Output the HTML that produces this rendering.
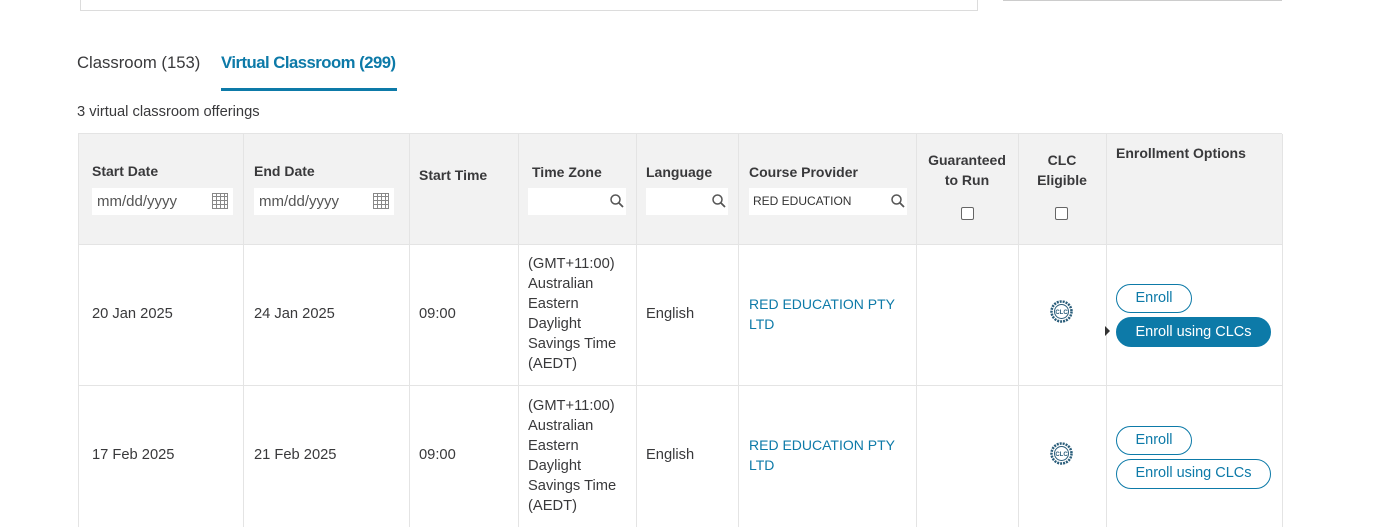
<!DOCTYPE html>
<html><head><style>
body{margin:0;width:1379px;height:527px;overflow:hidden;background:#fff;font-family:"Liberation Sans",sans-serif;color:#39393b;position:relative}
.a{position:absolute}
.topbox{left:80px;top:-2px;width:896px;height:12px;border:1px solid #dcdcdc;border-top:none}
.b{font-weight:bold;font-size:14px;color:#39393b}
.t{font-size:14.7px;line-height:20px}
.v{position:absolute;top:134px;height:393px;width:1px;background:#e4e4e4}
.h{position:absolute;left:78px;width:1204px;height:1px;background:#e4e4e4}
.inp{position:absolute;background:#fff;height:27px;font-size:15px;line-height:27px;color:#555}
.link{color:#0d7aa8;font-size:14px;line-height:20px}
.btn{position:absolute;border:1px solid #0d7aa8;border-radius:15px;color:#0d7aa8;font-size:14.5px;text-align:center;box-sizing:border-box}
.cb{position:absolute;width:11px;height:11px;border:1px solid #666;border-radius:2px;background:#fff}
</style></head><body>
<div class="a topbox"></div>
<div class="a" style="left:1003px;top:0;width:279px;height:1px;background:#ccc"></div>
<div class="a" style="left:77px;top:53px;font-size:16.7px;color:#39393b">Classroom (153)</div>
<div class="a" style="left:221px;top:53px;font-size:16.7px;font-weight:bold;color:#0d7aa8;letter-spacing:-0.5px">Virtual Classroom (299)</div>
<div class="a" style="left:221px;top:88px;width:176px;height:3px;background:#0d7aa8"></div>
<div class="a" style="left:77px;top:104px;font-size:14.7px">3 virtual classroom offerings</div>

<div class="a" style="left:78px;top:134px;width:1204px;height:110px;background:#f2f2f2"></div>
<div class="h" style="top:133px"></div><div class="h" style="top:244px"></div><div class="h" style="top:385px"></div>
<div class="v" style="left:78px"></div><div class="v" style="left:243px"></div><div class="v" style="left:409px"></div><div class="v" style="left:518px"></div><div class="v" style="left:636px"></div><div class="v" style="left:738px"></div><div class="v" style="left:916px"></div><div class="v" style="left:1018px"></div><div class="v" style="left:1106px"></div><div class="v" style="left:1282px"></div>

<div class="a b" style="left:92px;top:163px">Start Date</div>
<div class="inp" style="left:92px;top:188px;width:141px;padding-left:5px;box-sizing:border-box">mm/dd/yyyy<span style="position:absolute;right:5px;top:5px;width:16px;height:16px;border:1px solid #888;box-sizing:border-box;background:repeating-linear-gradient(90deg,transparent 0 3px,#888 3px 4px),repeating-linear-gradient(0deg,transparent 0 3px,#888 3px 4px)"></span></div>
<div class="a b" style="left:254px;top:163px">End Date</div>
<div class="inp" style="left:254px;top:188px;width:140px;padding-left:5px;box-sizing:border-box">mm/dd/yyyy<span style="position:absolute;right:5px;top:5px;width:16px;height:16px;border:1px solid #888;box-sizing:border-box;background:repeating-linear-gradient(90deg,transparent 0 3px,#888 3px 4px),repeating-linear-gradient(0deg,transparent 0 3px,#888 3px 4px)"></span></div>
<div class="a b" style="left:419px;top:167px">Start Time</div>
<div class="a b" style="left:532px;top:164px">Time Zone</div>
<div class="inp" style="left:528px;top:188px;width:98px"><svg style="position:absolute;right:2px;top:6px" width="14" height="14"><circle cx="5.5" cy="5.5" r="4.5" fill="none" stroke="#555" stroke-width="1.5"/><path d="M9 9l4 4" stroke="#555" stroke-width="1.8"/></svg></div>
<div class="a b" style="left:646px;top:164px">Language</div>
<div class="inp" style="left:646px;top:188px;width:82px"><svg style="position:absolute;right:2px;top:6px" width="14" height="14"><circle cx="5.5" cy="5.5" r="4.5" fill="none" stroke="#555" stroke-width="1.5"/><path d="M9 9l4 4" stroke="#555" stroke-width="1.8"/></svg></div>
<div class="a b" style="left:749px;top:164px">Course Provider</div>
<div class="inp" style="left:749px;top:188px;width:158px;font-size:12px;padding-left:4px;box-sizing:border-box;color:#333">RED EDUCATION<svg style="position:absolute;right:2px;top:6px" width="14" height="14"><circle cx="5.5" cy="5.5" r="4.5" fill="none" stroke="#555" stroke-width="1.5"/><path d="M9 9l4 4" stroke="#555" stroke-width="1.8"/></svg></div>
<div class="a b" style="left:916px;top:150px;width:102px;text-align:center;line-height:20px">Guaranteed<br>to Run</div>
<div class="cb" style="left:961px;top:207px"></div>
<div class="a b" style="left:1018px;top:150px;width:88px;text-align:center;line-height:20px">CLC<br>Eligible</div>
<div class="cb" style="left:1055px;top:207px"></div>
<div class="a b" style="left:1116px;top:145px">Enrollment Options</div>

<!-- row1 -->
<div class="a t" style="left:92px;top:304px">20 Jan 2025</div>
<div class="a t" style="left:254px;top:304px">24 Jan 2025</div>
<div class="a t" style="left:419px;top:304px">09:00</div>
<div class="a t" style="left:528px;top:254px">(GMT+11:00)<br>Australian<br>Eastern<br>Daylight<br>Savings Time<br>(AEDT)</div>
<div class="a t" style="left:646px;top:304px">English</div>
<div class="a link" style="left:749px;top:294px">RED EDUCATION PTY<br>LTD</div>
<svg class="a" style="left:1050px;top:300px" width="23" height="23"><circle cx="11.5" cy="11.5" r="10" fill="#fff" stroke="#2a5d7a" stroke-width="2.5" stroke-dasharray="2 1"/><circle cx="11.5" cy="11.5" r="7" fill="#fff" stroke="#2a5d7a" stroke-width="1"/><text x="11.5" y="14" font-size="6" font-weight="bold" text-anchor="middle" fill="#2a5d7a" font-family="Liberation Sans">CLC</text></svg>
<div class="btn" style="left:1116px;top:284px;width:76px;height:29px;line-height:26px">Enroll</div>
<div class="a" style="left:1105px;top:326px;width:0;height:0;border-left:5px solid #333;border-top:5px solid transparent;border-bottom:5px solid transparent"></div>
<div class="btn" style="left:1116px;top:317px;width:155px;height:30px;line-height:28px;background:#0d7aa8;color:#fff">Enroll using CLCs</div>

<!-- row2 -->
<div class="a t" style="left:92px;top:445px">17 Feb 2025</div>
<div class="a t" style="left:254px;top:445px">21 Feb 2025</div>
<div class="a t" style="left:419px;top:445px">09:00</div>
<div class="a t" style="left:528px;top:396px">(GMT+11:00)<br>Australian<br>Eastern<br>Daylight<br>Savings Time<br>(AEDT)</div>
<div class="a t" style="left:646px;top:445px">English</div>
<div class="a link" style="left:749px;top:435px">RED EDUCATION PTY<br>LTD</div>
<svg class="a" style="left:1050px;top:442px" width="23" height="23"><circle cx="11.5" cy="11.5" r="10" fill="#fff" stroke="#2a5d7a" stroke-width="2.5" stroke-dasharray="2 1"/><circle cx="11.5" cy="11.5" r="7" fill="#fff" stroke="#2a5d7a" stroke-width="1"/><text x="11.5" y="14" font-size="6" font-weight="bold" text-anchor="middle" fill="#2a5d7a" font-family="Liberation Sans">CLC</text></svg>
<div class="btn" style="left:1116px;top:426px;width:76px;height:29px;line-height:26px">Enroll</div>
<div class="btn" style="left:1116px;top:459px;width:155px;height:30px;line-height:27px">Enroll using CLCs</div>
</body></html>
